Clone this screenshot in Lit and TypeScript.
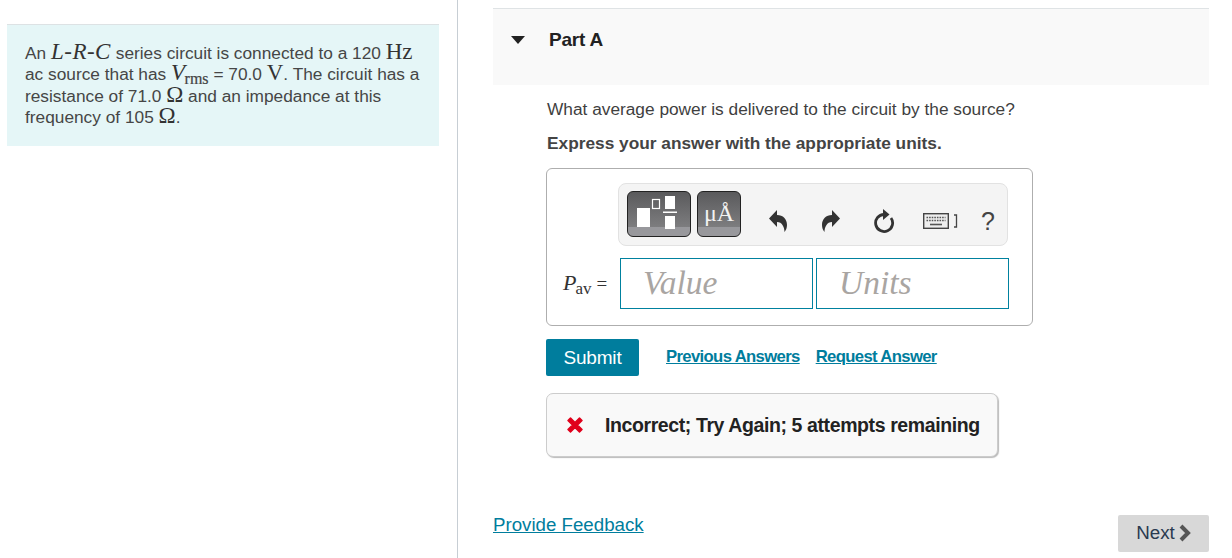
import { LitElement, html, css } from "lit";
import { customElement } from "lit/decorators.js";

@customElement("app-root")
export class AppRoot extends LitElement {
  static styles = css`
    :host { display: block; height: 558px; overflow: hidden; background: #fff; font-family: "Liberation Sans", Arial, sans-serif; color: #333; }
    * { box-sizing: border-box; }
    .page { display: grid; grid-template-columns: 457px 1px 1fr; height: 558px; }
    .left { padding: 24px 18px 0 7px; }
    .divider { background: #c7ced4; }
    .intro { height: 122px; border-top: 1px solid #dde2e4; background: #e5f6f7; padding: 17.6px 12px 0 18px; font-size: 17.3px; line-height: 21.5px; color: #464646; white-space: nowrap; }
    .m { font-family: "Liberation Serif", serif; font-size: 23px; color: #333; line-height: 0; }
    .i { font-style: italic; letter-spacing: 0.5px; }
    .sub { font-family: "Liberation Serif", serif; font-size: 16px; line-height: 0; position: relative; top: 4px; margin-left: -1px; -webkit-text-stroke: 0.2px #333; }
    .right { padding: 8px 23px 0 35px; display: flex; flex-direction: column; height: 558px; }
    .part { height: 77px; border-top: 1px solid #dfe3e5; background: #f9f9f9; display: flex; padding: 20px 0 0 18px; gap: 24px; font-weight: 700; font-size: 19px; color: #222; line-height: 22px; letter-spacing: -0.2px; }
    .caret { width: 14px; height: 8px; margin-top: 7px; }
    .body { padding: 13px 0 0 53px; }
    .q { font-size: 17.3px; line-height: 22px; color: #3f3f3f; padding-left: 1px; }
    .hint { font-size: 17.3px; font-weight: 700; line-height: 22px; margin-top: 12px; color: #444; padding-left: 1px; }
    .card { width: 487px; height: 158px; margin-top: 14px; border: 1px solid #aeaeae; border-radius: 6px; padding: 14px 0 0 71px; }
    .tools { width: 390px; height: 63px; background: #f4f4f4; border: 1px solid #e2e2e2; border-radius: 8px; display: flex; align-items: center; padding: 0 0 2px 8px; }
    .tbtn { height: 46px; border: 1px solid #222; border-radius: 6px; background: linear-gradient(#5a5a5c, #7d7d7f 80%, #98989c 80%); display: block; }
    .tbtn svg { display: block; }
    .b1 { width: 64px; }
    .b2 { width: 44px; margin-left: 6px; color: #f2f2f2; font-family: "Liberation Serif", serif; font-size: 24px; text-align: center; line-height: 43px; white-space: nowrap; }
    .icons { display: flex; align-items: center; margin-top: 14px; }
    .icons svg { display: block; }
    .undo { margin-left: 28px; }
    .redo { margin-left: 35px; }
    .reset { margin-left: 33px; }
    .kb { margin-left: 28px; }
    .help { margin-left: 23px; font-size: 25px; color: #444; line-height: 28px; }
    .row { display: flex; margin: 12px 0 0 -71px; align-items: flex-start; }
    .label { width: 73px; padding: 12px 0 0 16px; font-family: "Liberation Serif", serif; font-size: 22px; color: #333; white-space: nowrap; line-height: 26px; }
    .label .s { font-size: 17px; position: relative; top: 4px; margin-left: -1px; }
    .label .eq { font-size: 19px; margin-left: 5px; }
    .field { width: 193px; height: 51px; border: 1px solid #00819f; padding: 6px 0 0 22px; margin-right: 3px; font-family: "Liberation Serif", serif; font-style: italic; font-size: 33.5px; line-height: 36px; color: #a9a5a2; }
    .actions { display: flex; align-items: center; margin-top: 13px; }
    .submit { width: 93px; height: 37px; background: #007d9d; color: #fff; border-radius: 2px; font-size: 19px; display: flex; align-items: center; justify-content: center; letter-spacing: -0.2px; }
    a { color: #007d9d; font-weight: 700; font-size: 16.7px; text-decoration: underline; letter-spacing: -0.65px; }
    .prev { margin: 0 0 2px 27px; }
    .req { margin: 0 0 2px 16px; }
    .fb { width: 452px; height: 64px; margin-top: 17px; background: #f9f9f9; border: 1px solid #ccc; border-radius: 7px; box-shadow: 1px 1px 1px #bbb; display: flex; align-items: center; padding-left: 18px; gap: 20px; font-weight: 700; font-size: 19.5px; color: #222; letter-spacing: -0.4px; white-space: nowrap; }
    .foot { margin-top: auto; display: flex; justify-content: space-between; align-items: center; padding-bottom: 6px; }
    .pf { font-weight: 400; font-size: 18.7px; letter-spacing: 0; margin-bottom: 16px; }
    .next { width: 91px; height: 37px; background: #d8d8d8; border-radius: 2px; display: flex; align-items: center; justify-content: center; gap: 3px; font-size: 18.8px; color: #2a3a50; }
  `;

  render() {
    return html`
      <div class="page">
        <div class="left">
          <div class="intro">
            An <span class="m i">L-R-C</span> series circuit is connected to a 120 <span class="m">Hz</span><br />
            ac source that has <span class="m i">V</span><span class="sub">rms</span> = 70.0 <span class="m">V</span>. The circuit has a<br />
            resistance of 71.0 <span class="m">Ω</span> and an impedance at this<br />
            frequency of 105 <span class="m">Ω</span>.
          </div>
        </div>
        <div class="divider"></div>
        <div class="right">
          <div class="part">
            <svg class="caret" viewBox="0 0 14 8"><path d="M0 0H14L7 8Z" fill="#222" /></svg>
            <span>Part A</span>
          </div>
          <div class="body">
            <div class="q">What average power is delivered to the circuit by the source?</div>
            <div class="hint">Express your answer with the appropriate units.</div>
            <div class="card">
              <div class="tools">
                <div class="tbtn b1">
                  <svg width="62" height="44" viewBox="0 0 62 44">
                    <rect x="9" y="16" width="13" height="19" fill="#fff" />
                    <rect x="24.5" y="7.5" width="7" height="9" fill="none" stroke="#fff" stroke-width="1.2" />
                    <rect x="37" y="4" width="10" height="13" fill="#fff" />
                    <rect x="35" y="19.5" width="14" height="1.5" fill="#fff" />
                    <rect x="37" y="24" width="10" height="13" fill="#fff" />
                  </svg>
                </div>
                <div class="tbtn b2">μÅ</div>
                <div class="icons">
                  <svg class="undo" width="18" height="22" viewBox="0 0 18 22"><path d="M0 8.5 8 0V5C14 5 18 9 18 15 18 18 17 20 15.5 22 15.5 17 13 12 8 12V17Z" fill="#333" /></svg>
                  <svg class="redo" width="18" height="22" viewBox="0 0 18 22"><path d="M18 8.5 10 0V5C4 5 0 9 0 15 0 18 1 20 2.5 22 2.5 17 5 12 10 12V17Z" fill="#333" /></svg>
                  <svg class="reset" width="22" height="24" viewBox="0 0 22 24"><path d="M11 5.5A8.5 8.5 0 1 0 18 9" fill="none" stroke="#333" stroke-width="2.8" /><path d="M10 0 16.5 5.5 10 11Z" fill="#333" /></svg>
                  <svg class="kb" width="35" height="18" viewBox="0 0 35 18">
                    <rect x="0.7" y="1.7" width="24.6" height="14.6" fill="#eee" stroke="#444" stroke-width="1.4" />
                    <path d="M3.5 5.5H22.5M3.5 8.5H22.5" stroke="#555" stroke-width="1.6" stroke-dasharray="1.6 1" />
                    <path d="M7 12.5H19" stroke="#555" stroke-width="1.6" />
                    <path d="M31 3H33.5V15H31" fill="none" stroke="#444" stroke-width="1.3" />
                  </svg>
                  <span class="help">?</span>
                </div>
              </div>
              <div class="row">
                <div class="label"><i>P</i><span class="s">av</span><span class="eq">=</span></div>
                <div class="field">Value</div>
                <div class="field">Units</div>
              </div>
            </div>
            <div class="actions">
              <div class="submit">Submit</div>
              <a class="prev" href="#">Previous Answers</a>
              <a class="req" href="#">Request Answer</a>
            </div>
            <div class="fb">
              <svg width="20" height="20" viewBox="0 0 20 20"><path d="M3 5.5 5.5 3 10 7.5 14.5 3 17 5.5 12.5 10 17 14.5 14.5 17 10 12.5 5.5 17 3 14.5 7.5 10Z" fill="#e0001b" stroke="#e0001b" stroke-width="1.5" stroke-linejoin="round" /></svg>
              <span>Incorrect; Try Again; 5 attempts remaining</span>
            </div>
          </div>
          <div class="foot">
            <a class="pf" href="#">Provide Feedback</a>
            <div class="next">Next
              <svg width="13" height="18" viewBox="0 0 13 18"><path d="M3 2 10 9 3 16" fill="none" stroke="#555" stroke-width="4" /></svg>
            </div>
          </div>
        </div>
      </div>
    `;
  }
}
